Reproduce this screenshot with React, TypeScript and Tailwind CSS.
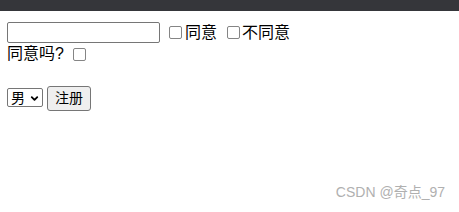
import { ChevronDown } from "lucide-react";

// ─── Checkbox ─────────────────────────────────────────────────────────────────

function Box({ className = "" }: { className?: string }) {
  return (
    <input
      type="checkbox"
      className={
        "appearance-none w-[13px] h-[13px] border border-[#858585] rounded-[2px] bg-white shrink-0 " +
        className
      }
    />
  );
}

export default function App() {
  return (
    <div
      className="relative w-[459px] h-[212px] bg-white text-black overflow-hidden"
      style={{ fontFamily: '"Liberation Sans", "Noto Sans CJK SC", sans-serif' }}
    >
      <div className="h-[11px] bg-[#35363a]" />

      <form className="pl-[7px] pt-[11px]">
        {/* row 1 */}
        <div className="flex items-center h-[21px] text-[16px]">
          <input
            type="text"
            className="w-[153px] h-[21px] border border-[#767676] rounded-[2px] px-[2px] text-[13.33px]"
          />
          <Box className="ml-[9px]" />
          <span className="ml-[3px] leading-none">同意</span>
          <Box className="ml-[10px]" />
          <span className="ml-[2px] leading-none">不同意</span>
        </div>

        {/* row 2 */}
        <div className="flex items-center h-[22px] text-[16px]">
          <span className="leading-none">同意吗?</span>
          <Box className="ml-[9px]" />
        </div>

        {/* row 3 */}
        <div className="flex items-center h-[25px] mt-[21px] text-[13.33px]">
          <div className="relative">
            <select className="appearance-none h-[19px] w-[36px] border border-[#767676] rounded-[2px] bg-white pl-[3px] text-[14px] leading-none">
              <option>男</option>
              <option>女</option>
            </select>
            <ChevronDown
              className="absolute right-[3px] top-[5px] w-[11px] h-[11px] pointer-events-none"
              strokeWidth={4}
            />
          </div>
          <button
            type="button"
            className="ml-[4px] h-[25px] w-[44px] border border-[#767676] rounded-[3px] bg-[#efefef] text-[14px]"
          >
            注册
          </button>
        </div>
      </form>

      <div className="absolute right-[14px] bottom-[9px] text-[14px] text-[#b0b0b0]">
        CSDN @奇点_97
      </div>
    </div>
  );
}
